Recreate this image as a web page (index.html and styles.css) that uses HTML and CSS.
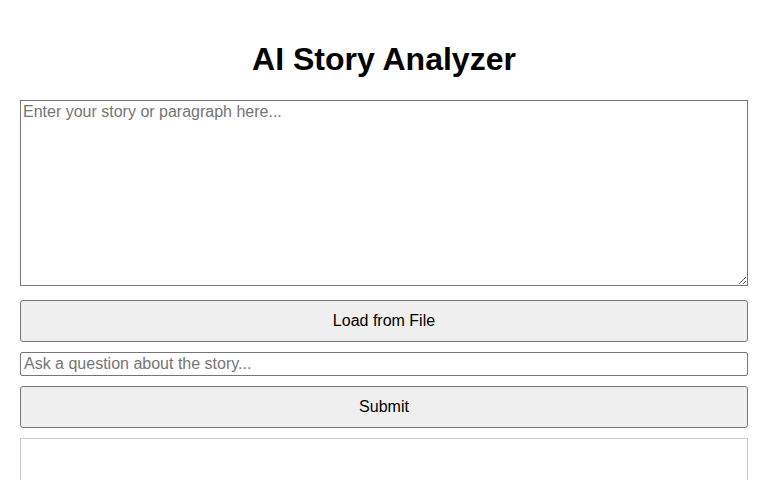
FILE: index.html
```html
<!DOCTYPE html>
<html lang="en">
<head>
    <meta charset="UTF-8">
    <meta name="viewport" content="width=device-width, initial-scale=1.0">
    <title>AI Story Analyzer</title>
    <link rel="stylesheet" href="styles.css">
</head>
<body>
    <h1>AI Story Analyzer</h1>

    <textarea id="storyText" class="story-input" placeholder="Enter your story or paragraph here..."></textarea>
    <button class="btn" id="loadBtn">Load from File</button>

    <input type="text" id="question" class="question-input" placeholder="Ask a question about the story...">
    <button class="btn" id="submitBtn">Submit</button>

    <div class="output" id="output"></div>
</body>
</html>
```

FILE: styles.css
```css
body {
    margin: 0;
    padding: 20px;
    font-family: "Liberation Sans", Arial, sans-serif;
    color: #000;
    background: #fff;
}

h1 {
    text-align: center;
    font-size: 32px;
    margin: 21px 0 22px 0;
    line-height: 37px;
}

.story-input,
.question-input,
.btn,
.output {
    display: block;
    width: 100%;
    box-sizing: border-box;
    font-family: "Liberation Sans", Arial, sans-serif;
    font-size: 16px;
}

.story-input {
    height: 186px;
    padding: 2px;
    border: 1px solid #767676;
    margin: 0 0 14px 0;
    resize: vertical;
}

.question-input {
    height: 24px;
    padding: 1px 3px;
    border: 1px solid #767676;
    border-radius: 2px;
    margin: 0 0 10px 0;
}

.story-input::placeholder,
.question-input::placeholder {
    color: #757575;
}

.btn {
    height: 42px;
    background: #efefef;
    border: 1px solid #767676;
    border-radius: 3px;
    color: #000;
    margin: 0 0 10px 0;
    cursor: pointer;
}

.btn:hover {
    background: #e5e5e5;
}

.output {
    min-height: 120px;
    border: 1px solid #ccc;
}
```
